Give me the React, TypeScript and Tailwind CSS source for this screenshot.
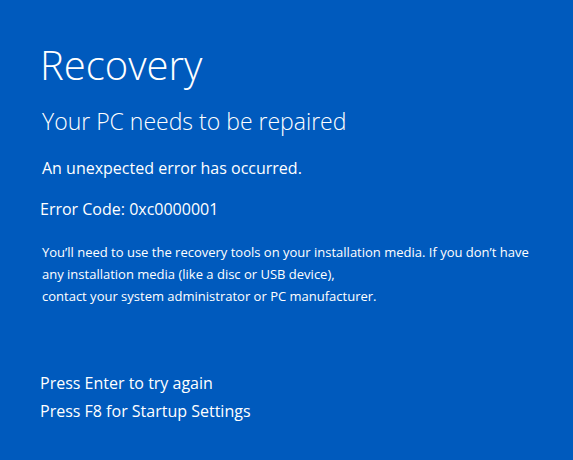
import React from "react";

const App = () => {
  return (
    <div
      className="w-[573px] h-[460px] bg-[#005abd] text-white overflow-hidden pl-10 pt-[37px]"
      style={{ fontFamily: '"Open Sans", "Noto Sans", sans-serif' }}
    >
      <h1 className="text-[40px] font-light leading-[56px]">Recovery</h1>

      <h2 className="ml-[2px] mt-[12px] text-[23px] font-light leading-[32px]">
        Your PC needs to be repaired
      </h2>

      <p className="ml-[2px] mt-[19px] text-[16px] leading-[24px]">
        An unexpected error has occurred.
      </p>

      <p className="mt-[17px] text-[16px] leading-[24px]">Error Code: 0xc0000001</p>

      <div className="ml-[2px] mt-[20px] text-[13px] leading-[22px]">
        <p>
          You’ll need to use the recovery tools on your installation media. If you don’t have
        </p>
        <p>any installation media (like a disc or USB device),</p>
        <p>contact your system administrator or PC manufacturer.</p>
      </div>

      <div className="mt-[62px] text-[16px] leading-[28px]">
        <p>Press Enter to try again</p>
        <p>Press F8 for Startup Settings</p>
      </div>
    </div>
  );
};

export default App;
